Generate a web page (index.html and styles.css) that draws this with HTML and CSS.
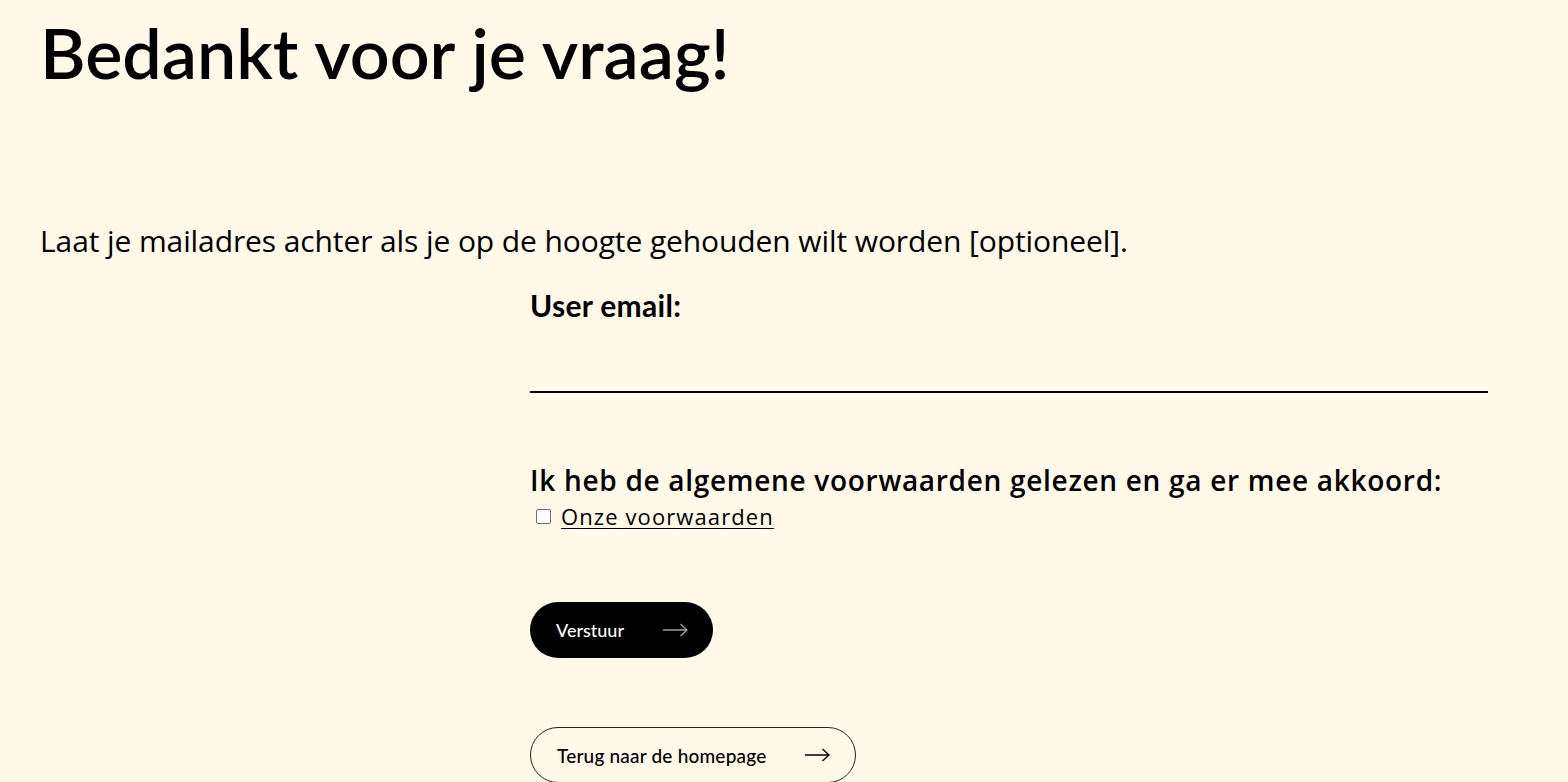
FILE: index.html
```html
<!DOCTYPE html>
<html lang="nl">
<head>
<meta charset="utf-8">
<title>Bedankt voor je vraag!</title>
<link rel="stylesheet" href="styles.css">
</head>
<body>
<main class="page">
  <h1 class="title">Bedankt voor je vraag!</h1>
  <p class="intro">Laat je mailadres achter als je op de hoogte gehouden wilt worden [optioneel].</p>
  <form class="form">
    <label class="label" for="email">User email:</label>
    <input class="input" id="email" type="email">
    <div class="terms">
      <span class="terms-label">Ik heb de algemene voorwaarden gelezen en ga er mee akkoord:</span>
      <label class="check"><input type="checkbox" class="box"><a href="#" class="link">Onze voorwaarden</a></label>
    </div>
    <button type="button" class="btn btn-dark"><span>Verstuur</span>
      <svg class="arrow" width="25" height="14" viewBox="0 0 25 14"><path d="M0 7H24M17.5 1L24 7L17.5 13" fill="none" stroke="currentColor" stroke-width="1.3"/></svg>
    </button>
    <a href="#" class="btn btn-outline"><span>Terug naar de homepage</span>
      <svg class="arrow" width="25" height="14" viewBox="0 0 25 14"><path d="M0 7H24M17.5 1L24 7L17.5 13" fill="none" stroke="currentColor" stroke-width="1.3"/></svg>
    </a>
  </form>
</main>
</body>
</html>
```

FILE: styles.css
```css
html, body {
  margin: 0;
  background: #fff9e7;
  color: #000;
  font-family: Lato, "Noto Sans", sans-serif;
}
.page {
  padding: 0 80px 0 40px;
}
.title {
  margin: 0;
  padding-top: 12px;
  font-size: 70px;
  font-weight: 600;
  line-height: 80px;
  letter-spacing: 0;
}
.intro {
  margin: 129px 0 0;
  font-family: "Open Sans", sans-serif;
  font-size: 30px;
  line-height: 40px;
  letter-spacing: -0.1px;
}
.form {
  margin-left: 490px;
  display: flex;
  flex-direction: column;
  align-items: flex-start;
}
.label {
  display: block;
  font-size: 30px;
  font-weight: 700;
  line-height: 36px;
  margin-top: 26px;
  letter-spacing: 0.3px;
}
.input {
  align-self: stretch;
  box-sizing: border-box;
  margin-top: 30px;
  height: 40px;
  border: 0;
  border-bottom: 2px solid #000;
  background: transparent;
  outline: none;
  padding: 0;
  font-size: 22px;
}
.terms {
  margin-top: 69px;
}
.terms-label {
  display: block;
  font-family: "Open Sans", sans-serif;
  font-size: 28px;
  font-weight: 600;
  line-height: 36px;
  letter-spacing: 0.7px;
}
.check {
  display: flex;
  align-items: center;
  gap: 10px;
  margin-top: 4px;
  margin-left: 6px;
  font-family: "Open Sans", sans-serif;
  font-size: 22px;
  line-height: 28px;
  letter-spacing: 1.1px;
}
.box {
  appearance: none;
  -webkit-appearance: none;
  box-sizing: border-box;
  width: 15px;
  height: 15px;
  margin: 0;
  border: 1.5px solid #6f6f78;
  border-radius: 2px;
  background: #fff;
}
.link {
  color: #000;
  text-decoration: underline;
  text-decoration-thickness: 1px;
  text-underline-offset: 3px;
}
.btn {
  display: inline-flex;
  align-items: center;
  gap: 39px;
  height: 56px;
  box-sizing: border-box;
  border-radius: 28px;
  font-family: Lato, sans-serif;
  font-size: 18px;
  font-weight: 500;
  text-decoration: none;
  cursor: pointer;
}
.btn-dark {
  margin-top: 72px;
  background: #000;
  color: #fff;
  border: 0;
  padding: 0 25px 0 26px;
}
.btn-dark .arrow {
  color: #a0a0a0;
}
.btn-outline {
  margin-top: 69px;
  background: transparent;
  color: #000;
  border: 1px solid #222;
  padding: 0 25px 0 26px;
  font-size: 19px;
  letter-spacing: 0.2px;
}
```
